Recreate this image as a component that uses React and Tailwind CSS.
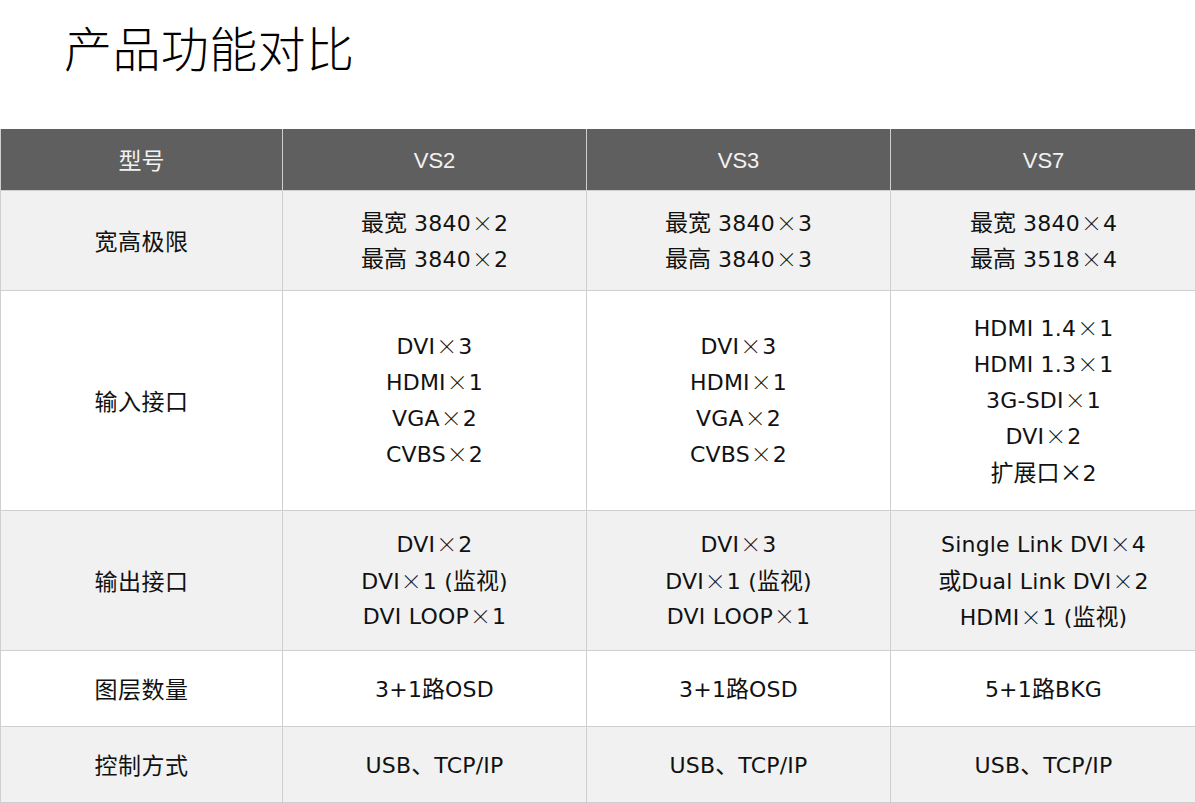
const rows = [
  {
    label: "宽高极限",
    bg: "bg-[#f1f1f1]",
    h: "h-[100px]",
    cells: [
      ["最宽 3840×2", "最高 3840×2"],
      ["最宽 3840×3", "最高 3840×3"],
      ["最宽 3840×4", "最高 3518×4"],
    ],
  },
  {
    label: "输入接口",
    bg: "bg-white",
    h: "h-[220px]",
    cells: [
      ["DVI×3", "HDMI×1", "VGA×2", "CVBS×2"],
      ["DVI×3", "HDMI×1", "VGA×2", "CVBS×2"],
      ["HDMI 1.4×1", "HDMI 1.3×1", "3G-SDI×1", "DVI×2", "扩展口×2"],
    ],
  },
  {
    label: "输出接口",
    bg: "bg-[#f1f1f1]",
    h: "h-[140px]",
    cells: [
      ["DVI×2", "DVI×1 (监视)", "DVI LOOP×1"],
      ["DVI×3", "DVI×1 (监视)", "DVI LOOP×1"],
      ["Single Link DVI×4", "或Dual Link DVI×2", "HDMI×1 (监视)"],
    ],
  },
  {
    label: "图层数量",
    bg: "bg-white",
    h: "h-[76px]",
    cells: [["3+1路OSD"], ["3+1路OSD"], ["5+1路BKG"]],
  },
  {
    label: "控制方式",
    bg: "bg-[#f1f1f1]",
    h: "h-[76px]",
    cells: [["USB、TCP/IP"], ["USB、TCP/IP"], ["USB、TCP/IP"]],
  },
];

// CJK runs and the × sign come from the CJK font, latin from DejaVu
function Line({ text }) {
  const parts = text.split(/([\u4e00-\u9fff、×]+)/).filter(Boolean);
  return (
    <div className="h-[36px] leading-[36px] whitespace-nowrap">
      {parts.map((p, i) =>
        p === "×" ? (
          <span key={i} className="font-['Noto_Sans_CJK_SC'] font-light text-[21px] px-[1px] leading-[36px]">
            {p}
          </span>
        ) : /[\u4e00-\u9fff、]/.test(p) ? (
          <span key={i} className="font-['Noto_Sans_CJK_SC'] text-[23px] leading-[36px]">
            {p}
          </span>
        ) : (
          <span key={i} className="font-['DejaVu_Sans'] text-[22px] tracking-[0.2px] leading-[36px]">
            {p}
          </span>
        )
      )}
    </div>
  );
}

export default function App() {
  return (
    <div className="w-[1195px] h-[803px] bg-white overflow-hidden font-['Liberation_Sans','Noto_Sans_CJK_SC',sans-serif]">
      {/* TITLE */}
      <h1 className="pl-[64px] pt-[21px] h-[129px] text-[48px] leading-[60px] font-light text-black tracking-[0.4px]">
        产品功能对比
      </h1>

      {/* TABLE */}
      <table className="w-[1196px] border-collapse table-fixed">
        <colgroup>
          <col className="w-[282px]" />
          <col className="w-[304px]" />
          <col className="w-[304px]" />
          <col className="w-[306px]" />
        </colgroup>
        <thead>
          <tr className="h-[61px] bg-[#5f5f5f] text-[#f2f2f2] text-[22px]">
            <th className="font-normal border-x border-[#cfcfcf] pt-[2px]">
              <span className="font-['Noto_Sans_CJK_SC'] text-[23px]">型号</span>
            </th>
            <th className="font-normal border-x border-[#cfcfcf] pt-[2px]">VS2</th>
            <th className="font-normal border-x border-[#cfcfcf] pt-[2px]">VS3</th>
            <th className="font-normal border-x border-[#cfcfcf] pt-[2px]">VS7</th>
          </tr>
        </thead>
        <tbody>
          {rows.map((row) => (
            <tr key={row.label} className={`${row.bg} ${row.h} text-[#111]`}>
              <td className="border border-[#cfcfcf] text-center">
                <span className="font-['Noto_Sans_CJK_SC'] text-[23px] tracking-[0.5px]">{row.label}</span>
              </td>
              {row.cells.map((lines, i) => (
                <td key={i} className="border border-[#cfcfcf] text-center pb-[2px]">
                  {lines.map((l, j) => (
                    <Line key={j} text={l} />
                  ))}
                </td>
              ))}
            </tr>
          ))}
        </tbody>
      </table>
    </div>
  );
}
